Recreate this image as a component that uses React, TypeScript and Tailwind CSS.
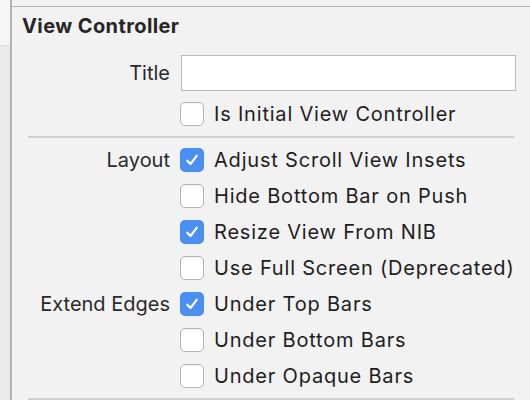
import React from 'react';

type Row = { label?: string; text: string; checked: boolean };

const layoutRows: Row[] = [
  { label: 'Layout', text: 'Adjust Scroll View Insets', checked: true },
  { text: 'Hide Bottom Bar on Push', checked: false },
  { text: 'Resize View From NIB', checked: true },
  { text: 'Use Full Screen (Deprecated)', checked: false },
  { label: 'Extend Edges', text: 'Under Top Bars', checked: true },
  { text: 'Under Bottom Bars', checked: false },
  { text: 'Under Opaque Bars', checked: false },
];

function Checkbox({ checked }: { checked: boolean }) {
  if (checked) {
    return (
      <span className="flex h-[24px] w-[24px] shrink-0 items-center justify-center rounded-[5px] bg-[#4a8ff2]">
        <svg width="16" height="16" viewBox="0 0 16 16" fill="none">
          <path
            d="M3.2 8.6 L6.6 12 L12.8 3.6"
            stroke="white"
            strokeWidth={2.2}
            strokeLinecap="round"
            strokeLinejoin="round"
          />
        </svg>
      </span>
    );
  }
  return (
    <span className="h-[24px] w-[24px] shrink-0 rounded-[5px] border border-[#b4b4b4] bg-white shadow-[inset_0_1px_1px_rgba(0,0,0,0.04)]" />
  );
}

function CheckRow({ label, text, checked }: Row) {
  return (
    <div className="grid h-[36px] grid-cols-[158px_1fr] items-center gap-x-[10px]">
      <span className="text-right text-[#2a2a2a]">{label ?? ''}</span>
      <div className="flex items-center gap-[10px]">
        <Checkbox checked={checked} />
        <span className="tracking-[0.8px] text-[#1e1e1e]">{text}</span>
      </div>
    </div>
  );
}

export default function App() {
  return (
    <div
      className="flex h-[400px] w-[530px] overflow-hidden bg-[#f2f2f2] text-[20px] leading-none"
      style={{ fontFamily: 'Inter, "Liberation Sans", sans-serif' }}
    >
      {/* left strip */}
      <div className="flex w-[10px] shrink-0 flex-col">
        <div className="h-[46px] border-b border-[#dcdcdc] bg-[#f6f6f6]" />
        <div className="flex-1 bg-[#eaeaea]" />
      </div>
      <div className="w-[2px] shrink-0 bg-[#b3b3b3]" />

      {/* inspector */}
      <div className="flex-1 pt-[6px]">
        <div className="border-t border-[#b3b3b3]">
          <h2 className="mt-[9px] h-[20px] pl-[10px] text-[20px] font-bold leading-[20px] tracking-[0.4px] text-[#262626]">
            View Controller
          </h2>

          <div className="mt-[19px] grid h-[36px] grid-cols-[158px_1fr] items-center gap-x-[10px] pr-[15px]">
            <span className="text-right text-[#2a2a2a]">Title</span>
            <input
              className="ml-[1px] h-[36px] w-full border border-[#b8b8b8] bg-white px-2 outline-none"
              defaultValue=""
            />
          </div>

          <div className="mt-[5px]">
            <CheckRow text="Is Initial View Controller" checked={false} />
          </div>

          <div className="ml-[16px] mr-[16px] mt-[4px] h-[2px] bg-[#d0d0d0]" />

          <div className="mt-[4px]">
            {layoutRows.map((row) => (
              <CheckRow key={row.text} {...row} />
            ))}
          </div>

          <div className="ml-[16px] mr-[16px] mt-[4px] h-[2px] bg-[#d0d0d0]" />
        </div>
      </div>
    </div>
  );
}
